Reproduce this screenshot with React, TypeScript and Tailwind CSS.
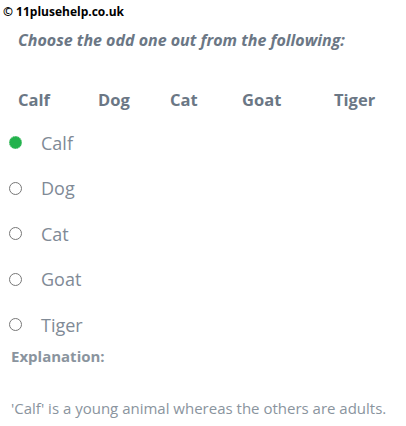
const font = { fontFamily: '"Open Sans", "Noto Sans", sans-serif' };

const words = [
  { label: "Calf", w: "w-[80px]" },
  { label: "Dog", w: "w-[72px]" },
  { label: "Cat", w: "w-[72px]" },
  { label: "Goat", w: "w-[92px]" },
  { label: "Tiger", w: "w-[72px]" },
];

const options = ["Calf", "Dog", "Cat", "Goat", "Tiger"];

function Radio({ checked }: { checked: boolean }) {
  if (checked) {
    return (
      <span className="w-[13px] h-[13px] rounded-full bg-[#22b24c] border border-dotted border-[#7fd195] shrink-0" />
    );
  }
  return <span className="w-[13px] h-[13px] rounded-full border border-[#777] bg-white shrink-0" />;
}

export default function App() {
  return (
    <div className="w-[406px] h-[426px] bg-white overflow-hidden" style={font}>
      <div className="pl-[3px] pt-[3px] text-[12px] leading-[17px] font-bold text-black">© 11plusehelp.co.uk</div>

      <div className="pl-[18px] pt-[8px] text-[16px] leading-[24px] font-bold italic text-[#6b7785]">
        Choose the odd one out from the following:
      </div>

      <div className="flex pl-[18px] pt-[37px] text-[16.5px] leading-[22px] font-bold text-[#6b7785]">
        {words.map((w) => (
          <span key={w.label} className={w.w}>
            {w.label}
          </span>
        ))}
      </div>

      <div className="flex flex-col pt-[9px]">
        {options.map((o, i) => (
          <div key={o} className="flex items-center h-[45.5px] pl-[9px]">
            <Radio checked={i === 0} />
            <span className="pl-[19px] text-[18px] leading-[24px] text-[#808a96]">{o}</span>
          </div>
        ))}
      </div>

      <div className="-mt-[2px] pl-[11px] text-[15px] leading-[20px] font-bold text-[#8a949e]">Explanation:</div>

      <div className="pl-[11px] pt-[32px] text-[15px] leading-[20px] text-[#8a949e]">
        'Calf' is a young animal whereas the others are adults.
      </div>
    </div>
  );
}
